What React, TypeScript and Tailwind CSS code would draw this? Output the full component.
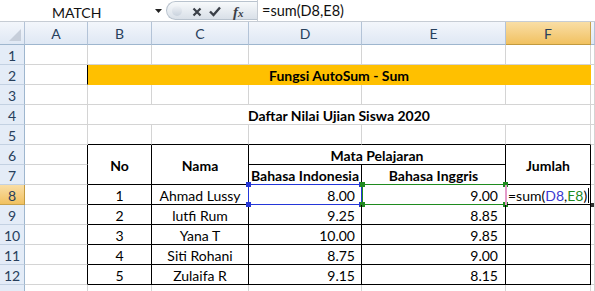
import React from "react";

const G = "border-[#d4d4d4]";

function Hdr({ children, sel = false }: { children?: React.ReactNode; sel?: boolean }) {
  return (
    <div
      className={
        "flex items-center justify-center border-r border-b text-[14px] text-[#27405c] " +
        (sel
          ? "bg-gradient-to-b from-[#f9dea5] to-[#f1c15f] border-r-[#c8a24d] border-b-[#c29a3f]"
          : "bg-gradient-to-b from-[#f3f6fb] to-[#dfe8f4] border-r-[#b3c3d7] border-b-[#9eb6ce]")
      }
    >
      {children}
    </div>
  );
}

function RowHdr({ n, sel = false }: { n?: number; sel?: boolean }) {
  return (
    <div
      className={
        "flex items-center justify-center border-r border-b text-[14px] text-[#27405c] pt-[1px] " +
        (sel
          ? "bg-gradient-to-b from-[#f9dea5] to-[#f1c15f] border-r-[#c29a3f] border-b-[#c8a24d]"
          : "bg-[#e4ecf7] border-r-[#9eb6ce] border-b-[#c3d1e2]")
      }
    >
      {n}
    </div>
  );
}

function C({ children, cls = "" }: { children?: React.ReactNode; cls?: string }) {
  return <div className={"flex items-center border-r border-b pt-[2px] " + cls}>{children}</div>;
}

const blank = `${G}`;
const tb = "border-r-black border-b-black";

function Handle({ pos, color }: { pos: string; color: string }) {
  return <div className={"absolute w-[5px] h-[5px] " + pos + " " + color} />;
}

export default function App() {
  const data = [
    ["1", "Ahmad Lussy", "8.00", "9.00"],
    ["2", "lutfi Rum", "9.25", "8.85"],
    ["3", "Yana T", "10.00", "9.85"],
    ["4", "Siti Rohani", "8.75", "9.00"],
    ["5", "Zulaifa R", "9.15", "8.15"],
  ];
  return (
    <div className="w-[595px] h-[291px] overflow-hidden bg-white font-['Lato',sans-serif] text-[14px] text-black">
      {/* formula bar */}
      <div className="h-[22px] flex items-stretch border-b border-[#c6ccd4] bg-white">
        <div className="w-[166px] relative flex items-center">
          <span className="absolute left-[52px] top-[2px] text-[14px] text-[#111]">MATCH</span>
          <svg className="absolute left-[155px] top-[9px]" width="7" height="4" viewBox="0 0 7 4">
            <path d="M0 0 L7 0 L3.5 4 Z" fill="#222" />
          </svg>
        </div>
        <div className="w-[91px] mt-[1px] mb-[1px] rounded-l-[10px] border border-r-0 border-[#b9c3ce] bg-gradient-to-b from-[#f7f9fb] to-[#d9e0e8] relative">
          <div className="absolute left-[5px] top-[4px] w-[10px] h-[10px] rounded-full bg-gradient-to-b from-[#eef1f5] to-[#c9d2dd]" />
          <svg className="absolute left-[25px] top-[5px]" width="10" height="10" viewBox="0 0 10 10">
            <path d="M1.5 1.5 L8.5 8.5 M8.5 1.5 L1.5 8.5" stroke="#3a3f47" strokeWidth="2.2" />
          </svg>
          <svg className="absolute left-[42px] top-[4px]" width="12" height="11" viewBox="0 0 12 11">
            <path d="M1 5.5 L4.5 9 L11 1.5" stroke="#3a3f47" strokeWidth="2.4" fill="none" />
          </svg>
          <span className="absolute left-[66px] top-[-1px] font-['Liberation_Serif',serif] italic font-bold text-[15px] text-[#3a3f47]">
            f<span className="text-[11px]">x</span>
          </span>
        </div>
        <div className="w-px bg-[#c6ccd4]" />
        <div className="flex-1 flex items-center pl-[4px] text-[14.5px] text-[#111]">=sum(D8,E8)</div>
      </div>

      {/* grid */}
      <div className="grid grid-cols-[25px_63px_64px_97px_113px_144px_85px_1fr] grid-rows-[23px_repeat(13,20px)]">
        <div className="relative border-r border-b border-r-[#b3c3d7] border-b-[#9eb6ce] bg-gradient-to-b from-[#f3f6fb] to-[#dfe8f4]">
          <svg className="absolute right-[3px] bottom-[3px]" width="12" height="12" viewBox="0 0 12 12">
            <path d="M12 0 L12 12 L0 12 Z" fill="#c6ceda" />
          </svg>
        </div>
        <Hdr>A</Hdr>
        <Hdr>B</Hdr>
        <Hdr>C</Hdr>
        <Hdr>D</Hdr>
        <Hdr>E</Hdr>
        <Hdr sel>F</Hdr>
        <Hdr />

        {/* row 1 */}
        <RowHdr n={1} />
        <C cls={blank} />
        <C cls={blank} />
        <C cls={blank} />
        <C cls={blank} />
        <C cls={blank} />
        <C cls={blank} />
        <C cls={blank} />

        {/* row 2 */}
        <RowHdr n={2} />
        <C cls="border-r-black border-b-[#d4d4d4]" />
        <C cls="col-span-5 justify-center bg-[#ffc000] border-[#ffc000] font-bold">Fungsi AutoSum - Sum</C>
        <C cls={blank} />

        {/* row 3 */}
        <RowHdr n={3} />
        <C cls={blank} />
        <C cls={blank} />
        <C cls={blank} />
        <C cls={blank} />
        <C cls={blank} />
        <C cls={blank} />
        <C cls={blank} />

        {/* row 4 */}
        <RowHdr n={4} />
        <C cls={blank} />
        <C cls={"col-span-5 justify-center font-bold " + blank}>Daftar Nilai Ujian Siswa 2020</C>
        <C cls={blank} />

        {/* row 5 */}
        <RowHdr n={5} />
        <C cls={blank} />
        <C cls="border-r-[#d4d4d4] border-b-black" />
        <C cls="border-r-[#d4d4d4] border-b-black" />
        <C cls="border-r-[#d4d4d4] border-b-black" />
        <C cls="border-r-[#d4d4d4] border-b-black" />
        <C cls="border-r-[#d4d4d4] border-b-black" />
        <C cls={blank} />

        {/* row 6 */}
        <RowHdr n={6} />
        <C cls="border-r-black border-b-[#d4d4d4]" />
        <C cls={"row-span-2 justify-center font-bold pt-0 " + tb}>No</C>
        <C cls={"row-span-2 justify-center font-bold pt-0 " + tb}>Nama</C>
        <C cls={"col-span-2 justify-center font-bold " + tb}>Mata Pelajaran</C>
        <C cls={"row-span-2 justify-center font-bold pt-0 " + tb}>Jumlah</C>
        <C cls={blank} />

        {/* row 7 */}
        <RowHdr n={7} />
        <C cls="border-r-black border-b-[#d4d4d4]" />
        <C cls={"justify-center font-bold " + tb}>Bahasa Indonesia</C>
        <C cls={"justify-center font-bold " + tb}>Bahasa Inggris</C>
        <C cls={blank} />

        {data.map((r, i) => {
          const first = i === 0;
          return (
            <React.Fragment key={i}>
              <RowHdr n={8 + i} sel={first} />
              <C cls="border-r-black border-b-[#d4d4d4]" />
              <C cls={"justify-center " + tb}>{r[0]}</C>
              <C cls={"justify-center " + tb}>{r[1]}</C>
              <C cls={"relative justify-end pr-[6px] " + tb}>
                {first && (
                  <>
                    <div className="absolute left-[-1px] top-[-1px] right-[-1px] bottom-[-1px] border border-[#2436d6]" />
                    <Handle pos="left-[-3px] top-[-3px]" color="bg-[#2436d6]" />
                    <Handle pos="left-[-3px] bottom-[-3px]" color="bg-[#2436d6]" />
                    <Handle pos="right-[-3px] top-[-3px]" color="bg-[#2436d6]" />
                    <Handle pos="right-[-3px] bottom-[-3px]" color="bg-[#2436d6]" />
                  </>
                )}
                <span className="relative">{r[2]}</span>
              </C>
              <C cls={"relative justify-end pr-[7px] " + tb}>
                {first && (
                  <>
                    <div className="absolute left-[0px] top-[-1px] right-[-1px] bottom-[-1px] border border-[#1f8a1f]" />
                    <Handle pos="left-[-2px] top-[-3px]" color="bg-[#1f8a1f]" />
                    <Handle pos="left-[-2px] bottom-[-3px]" color="bg-[#1f8a1f]" />
                    <Handle pos="right-[-3px] top-[-3px]" color="bg-[#1f8a1f]" />
                    <Handle pos="right-[-3px] bottom-[-3px]" color="bg-[#1f8a1f]" />
                  </>
                )}
                <span className="relative">{r[3]}</span>
              </C>
              <C cls={"relative " + tb}>
                {first && (
                  <>
                    <div className="absolute left-[-1px] top-[0px] bottom-[-1px] w-[2px] bg-[#e59bc9]" />
                    <span className="pl-[2px] whitespace-nowrap">
                      =sum(<span className="text-[#3a3ad0]">D8</span>,<span className="text-[#1f8a1f]">E8</span>)
                    </span>
                    <span className="ml-[1px] w-px h-[15px] bg-black shrink-0" />
                    <div className="absolute right-[-4px] bottom-[-3px] w-[3px] h-[4px] bg-[#333]" />
                  </>
                )}
              </C>
              <C cls={blank} />
            </React.Fragment>
          );
        })}

        {/* row 13 (cut off) */}
        <RowHdr />
        <C cls={blank} />
        <C cls={blank} />
        <C cls={blank} />
        <C cls={blank} />
        <C cls={blank} />
        <C cls={blank} />
        <C cls={blank} />
      </div>
    </div>
  );
}
